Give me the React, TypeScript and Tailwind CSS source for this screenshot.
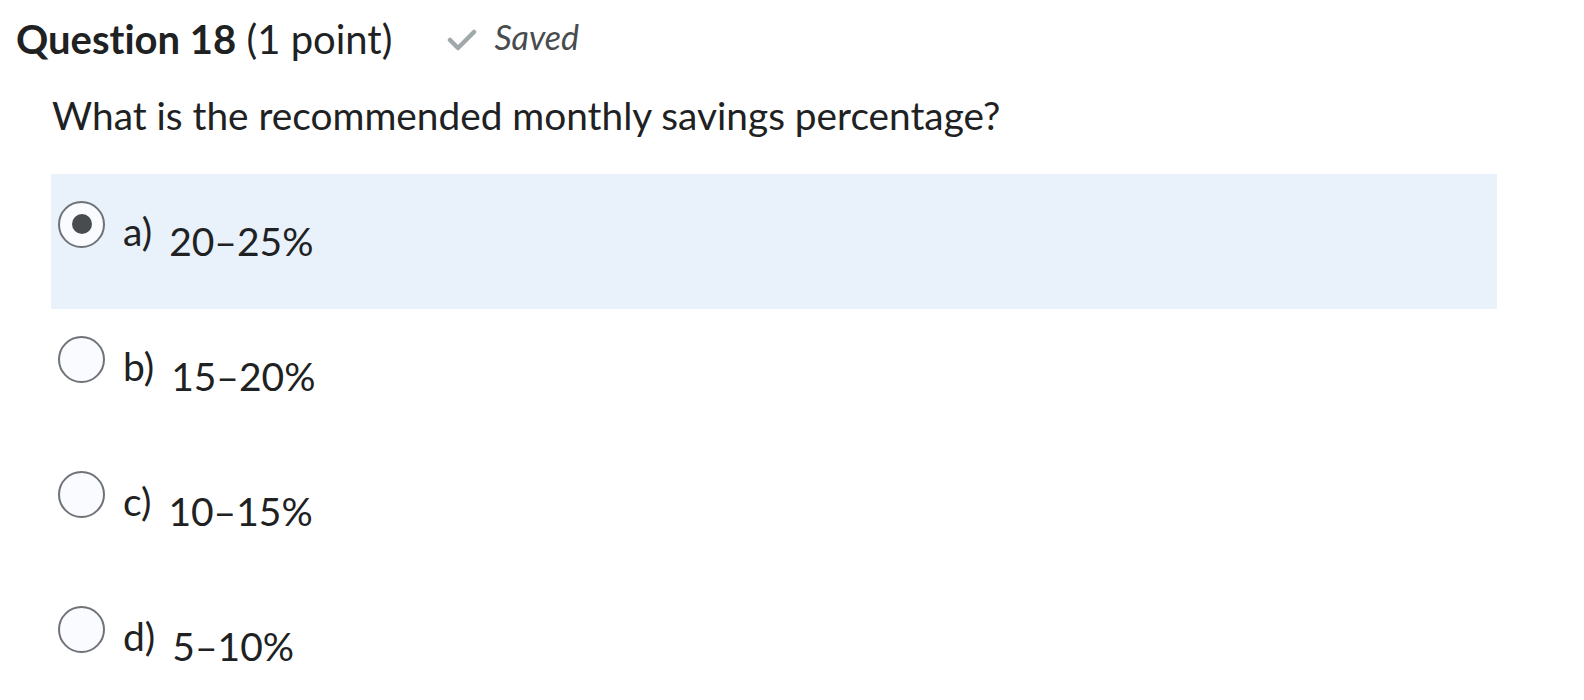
import React from "react";

interface Choice {
  key: string;
  label: string;
}

const choices: Choice[] = [
  { key: "a)", label: "20–25%" },
  { key: "b)", label: "15–20%" },
  { key: "c)", label: "10–15%" },
  { key: "d)", label: "5–10%" },
];

const CheckMark: React.FC = () => (
  <svg width="30" height="22" viewBox="0 0 30 22" className="mt-[14px]">
    <polyline
      points="3,11 11,19 27,3"
      fill="none"
      stroke="#a1a8ac"
      strokeWidth="4.5"
      strokeLinecap="round"
      strokeLinejoin="round"
    />
  </svg>
);

const App: React.FC = () => {
  const selected = 0;

  return (
    <div className="w-[1584px] h-[700px] bg-white text-[#202122] font-['Lato','Liberation_Sans',sans-serif] [font-variant-ligatures:none] overflow-hidden">
      {/* Header with question number and saved state */}
      <div className="flex items-start pl-[16px]">
        <h2 className="pt-[15px] text-[40px] leading-[1.2] whitespace-nowrap">
          <span className="font-bold">Question 18</span>
          <span className="font-normal"> (1 point)</span>
        </h2>
        <div className="flex items-start ml-[55px] pt-[15px]">
          <CheckMark />
          <span className="ml-[17px] mt-[2px] text-[34px] leading-[1.2] italic text-[#494c4e]">
            Saved
          </span>
        </div>
      </div>

      {/* Question text */}
      <p className="mt-[29px] pl-[52px] text-[38.8px] leading-[1.2]">
        What is the recommended monthly savings percentage?
      </p>

      {/* Choices */}
      <div className="mt-[35px] ml-[51px] w-[1446px] flex flex-col">
        {choices.map((c, i) => (
          <div
            key={c.key}
            className={
              "h-[135px] flex items-start " +
              (i === selected ? "bg-[#e9f1fb]" : "bg-white")
            }
          >
            <div className="mt-[27px] ml-[7px] w-[47px] h-[47px] rounded-full border-2 border-[#6f7377] bg-[#f9fbff] flex items-center justify-center shrink-0">
              {i === selected && (
                <div className="w-[20px] h-[20px] rounded-full bg-[#494c4e]" />
              )}
            </div>
            <span className="ml-[18px] mr-[17px] mt-[34px] text-[39px] leading-[1.2]">
              {c.key}
            </span>
            <span className="mt-[44px] text-[39px] leading-[1.2]">{c.label}</span>
          </div>
        ))}
      </div>
    </div>
  );
};

export default App;
